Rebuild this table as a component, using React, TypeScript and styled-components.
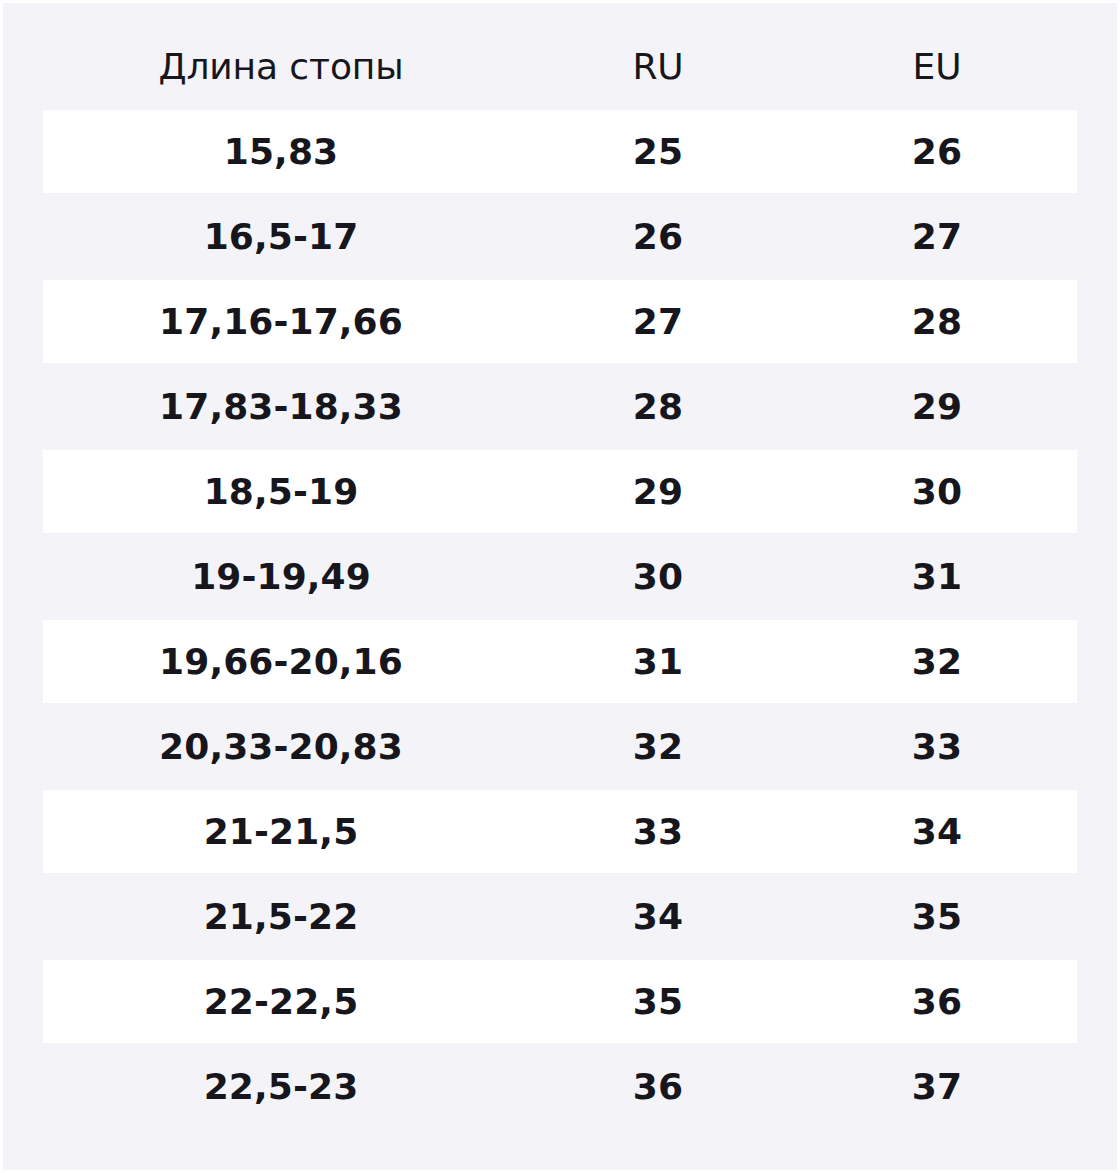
import React from "react";
import styled, { createGlobalStyle } from "styled-components";

const Global = createGlobalStyle`
  html, body { margin: 0; padding: 0; background: #ffffff; }
  body { font-family: "DejaVu Sans", "Noto Sans", sans-serif; color: #16161c; }
`;

const Page = styled.div`
  padding: 3px;
  width: 1114px;
`;

const Card = styled.div`
  background: #f4f4f8;
  padding: 40px;
  height: 1087px;
`;

const Row = styled.div<{ $variant: "head" | "white" | "gray" }>`
  display: grid;
  grid-template-columns: 476px 278px 280px;
  align-items: center;
  height: ${(p) => (p.$variant === "head" ? "67px" : p.$variant === "white" ? "83px" : "87px")};
  background: ${(p) => (p.$variant === "white" ? "#ffffff" : "transparent")};
  padding-bottom: ${(p) => (p.$variant === "head" ? "20px" : "0")};
  box-sizing: border-box;
`;

const Cell = styled.div<{ $head?: boolean }>`
  text-align: center;
  font-size: 36px;
  line-height: 1;
  font-weight: ${(p) => (p.$head ? 400 : 700)};
  letter-spacing: ${(p) => (p.$head ? "-0.1px" : "0.1px")};
`;

const data: [string, string, string][] = [
  ["15,83", "25", "26"],
  ["16,5-17", "26", "27"],
  ["17,16-17,66", "27", "28"],
  ["17,83-18,33", "28", "29"],
  ["18,5-19", "29", "30"],
  ["19-19,49", "30", "31"],
  ["19,66-20,16", "31", "32"],
  ["20,33-20,83", "32", "33"],
  ["21-21,5", "33", "34"],
  ["21,5-22", "34", "35"],
  ["22-22,5", "35", "36"],
  ["22,5-23", "36", "37"],
];

export default function App() {
  return (
    <>
      <Global />
      <Page>
        <Card>
          <Row $variant="head">
            <Cell $head>Длина стопы</Cell>
            <Cell $head>RU</Cell>
            <Cell $head>EU</Cell>
          </Row>
          {data.map((r, i) => (
            <Row key={i} $variant={i % 2 === 0 ? "white" : "gray"}>
              <Cell>{r[0]}</Cell>
              <Cell>{r[1]}</Cell>
              <Cell>{r[2]}</Cell>
            </Row>
          ))}
        </Card>
      </Page>
    </>
  );
}
